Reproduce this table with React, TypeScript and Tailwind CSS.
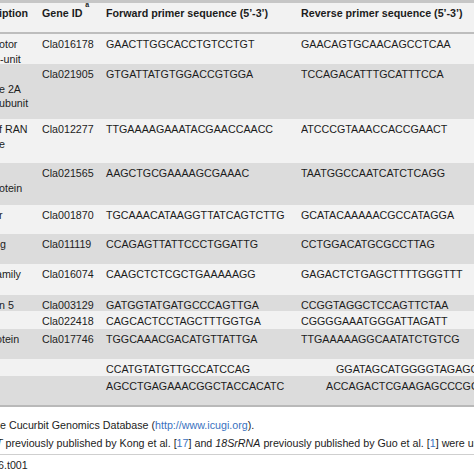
import React from "react";

type Row = {
  h: string;
  desc: { text: string; cls?: string }[];
  id: string;
  fwd: string;
  rev: string;
  bg: string;
  revCls?: string;
};

const rows: Row[] = [
  { h: "h-[30px]", desc: [{ text: "otor", cls: "ml-[-1px]" }, { text: "-unit", cls: "ml-[0px]" }], id: "Cla016178", fwd: "GAACTTGGCACCTGTCCTGT", rev: "GAACAGTGCAACAGCCTCAA", bg: "bg-[#f2f2f2]" },
  { h: "h-[55px]", desc: [{ text: "\u00a0" }, { text: "e 2A", cls: "ml-[-1px]" }, { text: "ubunit", cls: "ml-[-1px]" }], id: "Cla021905", fwd: "GTGATTATGTGGACCGTGGA", rev: "TCCAGACATTTGCATTTCCA", bg: "bg-[#dcdcdc]" },
  { h: "h-[44px]", desc: [{ text: "f RAN", cls: "ml-[-1px]" }, { text: "e", cls: "ml-[-1px]" }], id: "Cla012277", fwd: "TTGAAAAGAAATACGAACCAACC", rev: "ATCCCGTAAACCACCGAACT", bg: "bg-[#f2f2f2]" },
  { h: "h-[42px]", desc: [{ text: "\u00a0" }, { text: "otein", cls: "ml-[-1px]" }], id: "Cla021565", fwd: "AAGCTGCGAAAAGCGAAAC", rev: "TAATGGCCAATCATCTCAGG", bg: "bg-[#dcdcdc]" },
  { h: "h-[29px]", desc: [{ text: "r", cls: "ml-[-1px]" }], id: "Cla001870", fwd: "TGCAAACATAAGGTTATCAGTCTTG", rev: "GCATACAAAAACGCCATAGGA", bg: "bg-[#f2f2f2]" },
  { h: "h-[30px]", desc: [{ text: "g", cls: "ml-[0px]" }], id: "Cla011119", fwd: "CCAGAGTTATTCCCTGGATTG", rev: "CCTGGACATGCGCCTTAG", bg: "bg-[#dcdcdc]" },
  { h: "h-[31px]", desc: [{ text: "amily", cls: "ml-[-4px]" }], id: "Cla016074", fwd: "CAAGCTCTCGCTGAAAAAGG", rev: "GAGACTCTGAGCTTTTGGGTTT", bg: "bg-[#f2f2f2]" },
  { h: "h-[16px]", desc: [{ text: "n 5", cls: "ml-[-1px]" }], id: "Cla003129", fwd: "GATGGTATGATGCCCAGTTGA", rev: "CCGGTAGGCTCCAGTTCTAA", bg: "bg-[#dcdcdc]" },
  { h: "h-[18px]", desc: [{ text: "\u00a0" }], id: "Cla022418", fwd: "CAGCACTCCTAGCTTTGGTGA", rev: "CGGGGAAATGGGATTAGATT", bg: "bg-[#f2f2f2]" },
  { h: "h-[30px]", desc: [{ text: "otein", cls: "ml-[-4px]" }], id: "Cla017746", fwd: "TGGCAAACGACATGTTATTGA", rev: "TTGAAAAAGGCAATATCTGTCG", bg: "bg-[#dcdcdc]" },
  { h: "h-[17px]", desc: [{ text: "\u00a0" }], id: "", fwd: "CCATGTATGTTGCCATCCAG", rev: "GGATAGCATGGGGTAGAGGA", bg: "bg-[#f2f2f2]", revCls: "ml-[35px]" },
  { h: "h-[29px]", desc: [{ text: "\u00a0" }], id: "", fwd: "AGCCTGAGAAACGGCTACCACATC", rev: "ACCAGACTCGAAGAGCCCGGAT", bg: "bg-[#dcdcdc]", revCls: "ml-[25px]" },
];

export default function App() {
  return (
    <div className="w-[474px] h-[474px] overflow-hidden bg-white font-['Liberation_Sans',Arial,sans-serif] text-[10.7px] leading-[14.5px] text-[#1c1c1c]">
      <div className="h-[3px] bg-[#c6c6c6]" />
      {/* header */}
      <div className="flex h-[31px] bg-[#f2f2f2] pt-[3px] font-bold border-b-2 border-[#bdbdbd] whitespace-nowrap">
        <div className="w-[42px] shrink-0 overflow-hidden">
          <div className="ml-[-1px]">iption</div>
        </div>
        <div className="w-[64px] shrink-0">
          Gene ID <sup className="text-[7px] align-top relative top-[-1px]">a</sup>
        </div>
        <div className="w-[195px] shrink-0">Forward primer sequence (5’-3’)</div>
        <div className="flex-1">Reverse primer sequence (5’-3’)</div>
      </div>
      {/* rows */}
      {rows.map((r, i) => (
        <div key={i} className={`flex ${r.h} ${r.bg} pt-[3px] whitespace-nowrap overflow-hidden`}>
          <div className="w-[42px] shrink-0 overflow-hidden">
            {r.desc.map((d, j) => (
              <div key={j} className={d.cls ?? ""}>
                {d.text}
              </div>
            ))}
          </div>
          <div className="w-[64px] shrink-0">{r.id}</div>
          <div className="w-[195px] shrink-0">{r.fwd}</div>
          <div className="flex-1 overflow-hidden">
            <div className={r.revCls ?? ""}>{r.rev}</div>
          </div>
        </div>
      ))}
      <div className="h-[2px] bg-[#b9b9b9]" />
      {/* footnotes */}
      <div className="pt-[9px] pb-[2px] leading-[18px] whitespace-nowrap overflow-hidden border-b border-[#cfcfcf]">
        <div>
          e Cucurbit Genomics Database (<span className="text-[#3a72c0]">http://www.icugi.org</span>).
        </div>
        <div className="ml-[-4px]">
          <i>T</i> previously published by Kong et al. [<span className="text-[#3a72c0]">17</span>] and{" "}
          <i>18SrRNA</i> previously published by Guo et al. [<span className="text-[#3a72c0]">1</span>] were used.
        </div>
      </div>
      <div className="pt-[3px] whitespace-nowrap overflow-hidden">
        <div className="ml-[-2px]">6.t001</div>
      </div>
    </div>
  );
}
